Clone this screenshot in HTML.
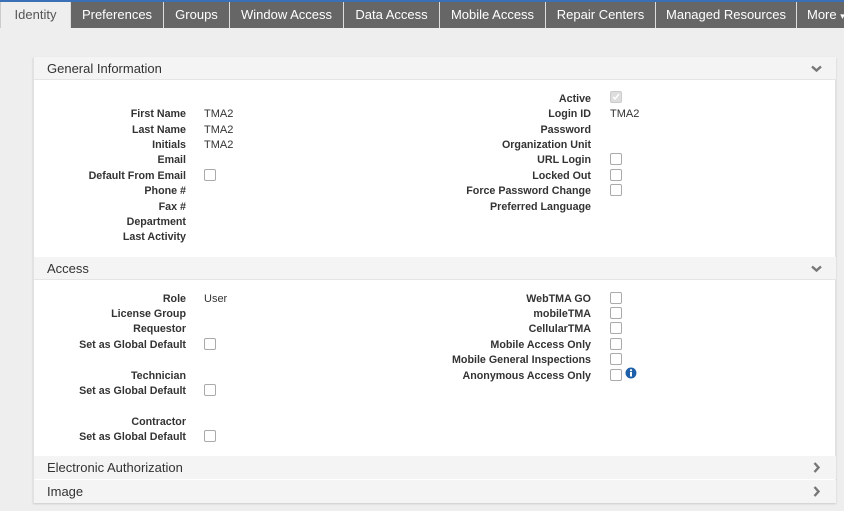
<!DOCTYPE html>
<html><head><meta charset="utf-8"><style>
*{margin:0;padding:0;box-sizing:border-box}
body{width:844px;height:511px;background:#eeeeee;font-family:"Liberation Sans",Arial,sans-serif;position:relative;overflow:hidden;color:#333}
.top{position:absolute;left:0;top:0;width:844px;height:2px;background:#3b6fb6}
.tab{position:absolute;top:2px;height:26px;background:#666;color:#fff;font-size:13px;line-height:25px;text-align:center;border-left:1px solid #ddd;white-space:nowrap;overflow:hidden}
.tab.act{background:#eee;color:#555;border-left:1px solid #ccc}
.panel{position:absolute;left:33px;top:57px;width:803px;height:446px;background:#fff;border:1px solid #e2e2e2;box-shadow:0 1px 2px rgba(0,0,0,.15)}
.hd{position:absolute;left:34px;width:802px;height:23px;background:#f4f4f4;font-size:13px;line-height:23px;padding-left:13px;color:#333}
.hd.b{border-bottom:1px solid #e5e5e5}
.l{position:absolute;font-size:10.7px;font-weight:bold;text-align:right;line-height:14px;white-space:nowrap;margin-top:1px}
.v{position:absolute;font-size:11px;line-height:14px;color:#333;margin-top:1px}
.cb{position:absolute;width:12px;height:12px;border:1px solid #aaa;border-radius:2px;background:#fff;margin-top:-1px}
</style></head><body>
<div class="top"></div>
<div class="tab act" style="left:0;width:70px">Identity</div>
<div class="tab" style="left:70px;width:93px">Preferences</div>
<div class="tab" style="left:163px;width:66px">Groups</div>
<div class="tab" style="left:229px;width:114px">Window Access</div>
<div class="tab" style="left:343px;width:96px">Data Access</div>
<div class="tab" style="left:439px;width:106px">Mobile Access</div>
<div class="tab" style="left:545px;width:110px">Repair Centers</div>
<div class="tab" style="left:655px;width:141px">Managed Resources</div>
<div class="tab" style="left:796px;width:48px;text-align:left;padding-left:10px">More <span style="font-size:9px">▾</span></div>
<div class="panel"></div>
<div class="hd b" style="top:57px">General Information<svg style="position:absolute;right:14px;top:8px" width="11" height="8"><path d="M1 1.5l4.5 4 4.5-4" stroke="#777" stroke-width="2.4" fill="none"/></svg></div>
<div class="hd b" style="top:257px">Access<svg style="position:absolute;right:14px;top:8px" width="11" height="8"><path d="M1 1.5l4.5 4 4.5-4" stroke="#777" stroke-width="2.4" fill="none"/></svg></div>
<div class="hd" style="top:456px">Electronic Authorization<svg style="position:absolute;right:15px;top:6px" width="8" height="11"><path d="M1.5 1l4 4.5-4 4.5" stroke="#777" stroke-width="2.4" fill="none"/></svg></div>
<div class="hd" style="top:480px;height:23px">Image<svg style="position:absolute;right:15px;top:6px" width="8" height="11"><path d="M1.5 1l4 4.5-4 4.5" stroke="#777" stroke-width="2.4" fill="none"/></svg></div>

<div class="l" style="right:658px;top:106px">First Name</div><div class="v" style="left:204px;top:106px">TMA2</div>
<div class="l" style="right:658px;top:122px">Last Name</div><div class="v" style="left:204px;top:122px">TMA2</div>
<div class="l" style="right:658px;top:137px">Initials</div><div class="v" style="left:204px;top:137px">TMA2</div>
<div class="l" style="right:658px;top:152px">Email</div>
<div class="l" style="right:658px;top:168px">Default From Email</div><div class="cb" style="left:204px;top:170px"></div>
<div class="l" style="right:658px;top:183px">Phone #</div>
<div class="l" style="right:658px;top:199px">Fax #</div>
<div class="l" style="right:658px;top:214px">Department</div>
<div class="l" style="right:658px;top:229px">Last Activity</div>

<div class="l" style="right:253px;top:91px">Active</div><div class="cb" style="left:610px;top:92px;background:#ddd;border-color:#ccc"><svg width="10" height="10" style="position:absolute;left:0;top:0"><path d="M2 5l2 2 4-5" stroke="#fff" stroke-width="1.5" fill="none"/></svg></div>
<div class="l" style="right:253px;top:106px">Login ID</div><div class="v" style="left:610px;top:106px">TMA2</div>
<div class="l" style="right:253px;top:122px">Password</div>
<div class="l" style="right:253px;top:137px">Organization Unit</div>
<div class="l" style="right:253px;top:152px">URL Login</div><div class="cb" style="left:610px;top:154px"></div>
<div class="l" style="right:253px;top:168px">Locked Out</div><div class="cb" style="left:610px;top:170px"></div>
<div class="l" style="right:253px;top:183px">Force Password Change</div><div class="cb" style="left:610px;top:185px"></div>
<div class="l" style="right:253px;top:199px">Preferred Language</div>

<div class="l" style="right:658px;top:291px">Role</div><div class="v" style="left:204px;top:291px">User</div>
<div class="l" style="right:658px;top:306px">License Group</div>
<div class="l" style="right:658px;top:321px">Requestor</div>
<div class="l" style="right:658px;top:337px">Set as Global Default</div><div class="cb" style="left:204px;top:339px"></div>
<div class="l" style="right:658px;top:368px">Technician</div>
<div class="l" style="right:658px;top:383px">Set as Global Default</div><div class="cb" style="left:204px;top:385px"></div>
<div class="l" style="right:658px;top:414px">Contractor</div>
<div class="l" style="right:658px;top:429px">Set as Global Default</div><div class="cb" style="left:204px;top:431px"></div>

<div class="l" style="right:253px;top:291px">WebTMA GO</div><div class="cb" style="left:610px;top:293px"></div>
<div class="l" style="right:253px;top:306px">mobileTMA</div><div class="cb" style="left:610px;top:308px"></div>
<div class="l" style="right:253px;top:321px">CellularTMA</div><div class="cb" style="left:610px;top:323px"></div>
<div class="l" style="right:253px;top:337px">Mobile Access Only</div><div class="cb" style="left:610px;top:339px"></div>
<div class="l" style="right:253px;top:352px">Mobile General Inspections</div><div class="cb" style="left:610px;top:354px"></div>
<div class="l" style="right:253px;top:368px">Anonymous Access Only</div><div class="cb" style="left:610px;top:370px"></div>
<svg style="position:absolute;left:625px;top:367px" width="12" height="12"><circle cx="6" cy="6" r="5.5" fill="#1d5fa8"/><rect x="5" y="5" width="2" height="4.5" fill="#fff"/><circle cx="6" cy="3.2" r="1.1" fill="#fff"/></svg>
</body></html>
